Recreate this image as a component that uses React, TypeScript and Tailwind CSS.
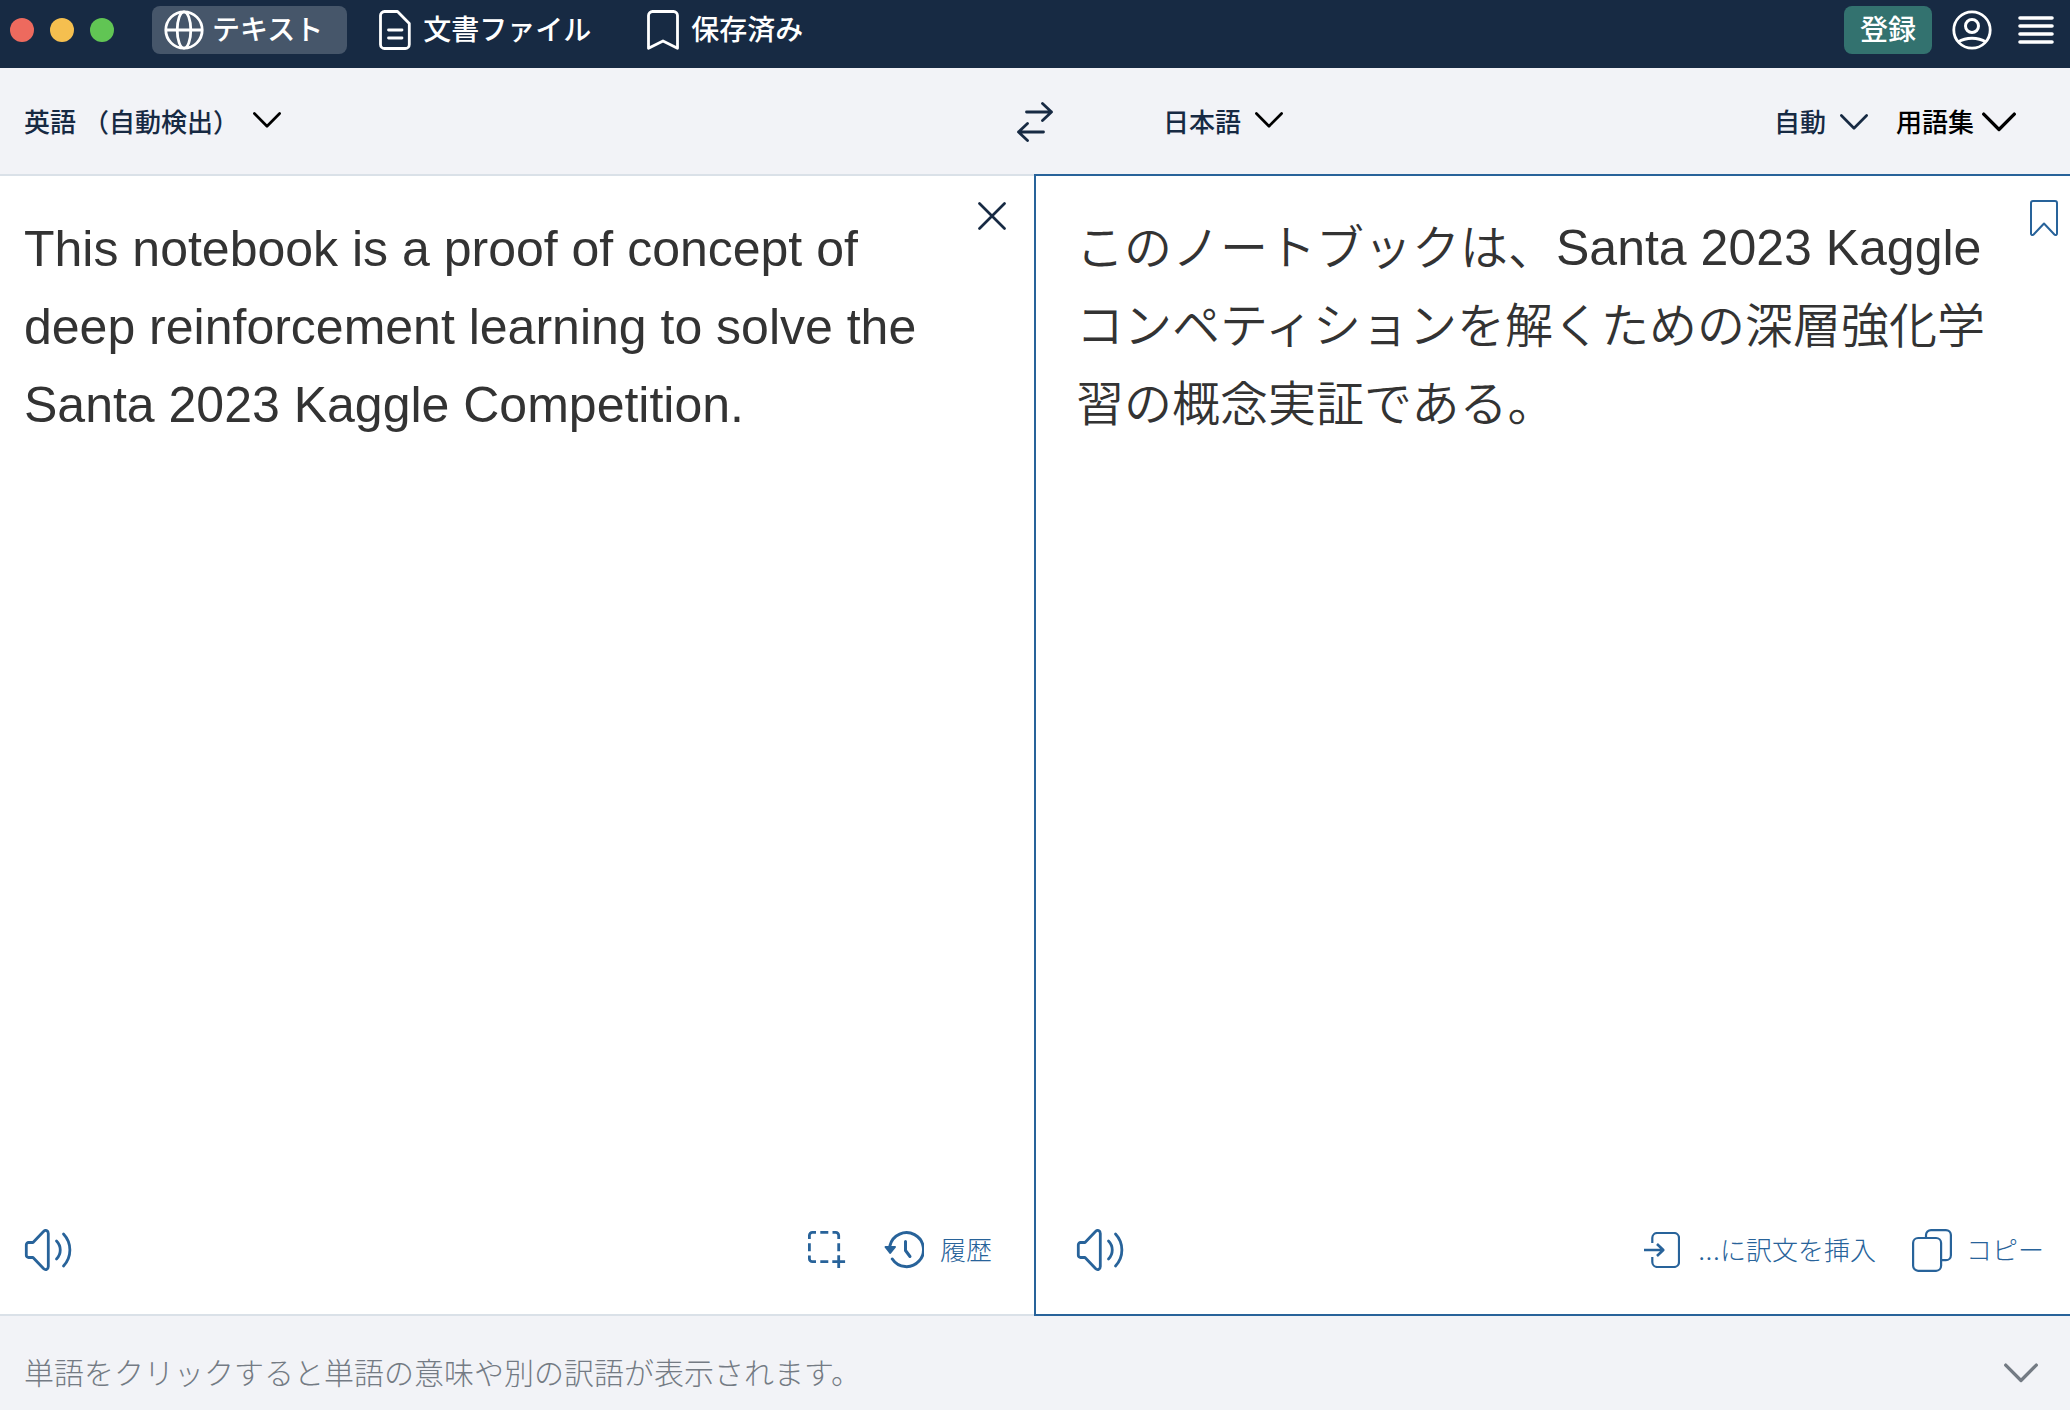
import { useState } from "react";
import type { ReactNode } from "react";

interface IconProps {
	className?: string;
}

const GlobeIcon = () => (
	<svg width="40" height="40" viewBox="0 0 40 40" fill="none" stroke="currentColor" strokeWidth="2.8">
		<circle cx="20" cy="20" r="18.2" />
		<ellipse cx="20" cy="20" rx="6.8" ry="18.2" />
		<path d="M1.6 20h36.8" />
	</svg>
);

const DocumentIcon = () => (
	<svg
		width="32"
		height="40"
		viewBox="0 0 32 40"
		fill="none"
		stroke="currentColor"
		strokeWidth="2.8"
		strokeLinecap="round"
		strokeLinejoin="round"
	>
		<path d="M5.5 1.5H18.5L30.3 13.500V34.500a4 4 0 0 1-4 4H5.500a4 4 0 0 1-4-4V5.500a4 4 0 0 1 4-4Z" />
		<path d="M9.500 20H23M9.500 28H23" />
	</svg>
);

const SavedIcon = () => (
	<svg
		width="32"
		height="40"
		viewBox="0 0 32 40"
		fill="none"
		stroke="currentColor"
		strokeWidth="2.8"
		strokeLinejoin="round"
	>
		<path d="M1.500 38.300V5.500a4 4 0 0 1 4-4H26.500a4 4 0 0 1 4 4V38.300L16 31Z" />
	</svg>
);

const AccountIcon = () => (
	<svg width="40" height="40" viewBox="0 0 40 40" fill="none" stroke="currentColor" strokeWidth="2.8">
		<circle cx="20" cy="20" r="18.2" />
		<circle cx="20" cy="16" r="6.500" strokeWidth="3" />
		<path d="M6 32C14 27 26 27 34 32" />
	</svg>
);

const MenuIcon = () => (
	<svg
		width="36"
		height="28"
		viewBox="0 0 36 28"
		fill="none"
		stroke="currentColor"
		strokeWidth="3.600"
		strokeLinecap="round"
	>
		<path d="M2 2H34M2 10H34M2 18H34M2 26H34" />
	</svg>
);

const ChevronIcon = ({ className }: IconProps) => (
	<svg
		className={className}
		viewBox="0 0 28 16"
		fill="none"
		stroke="currentColor"
		strokeWidth="2.700"
		strokeLinecap="round"
		strokeLinejoin="round"
	>
		<path d="M1.400 1.500L14 14.200L26.600 1.500" />
	</svg>
);

const SwapIcon = () => (
	<svg
		width="36"
		height="40"
		viewBox="0 0 36 40"
		fill="none"
		stroke="currentColor"
		strokeWidth="2.800"
		strokeLinecap="round"
		strokeLinejoin="round"
	>
		<path d="M9.500 10H34.500M25.500 1.500L34.500 10L25.500 18.500" />
		<path d="M26.500 30H1.500M10.500 21.500L1.500 30L10.500 38.500" />
	</svg>
);

const CloseIcon = () => (
	<svg
		width="28"
		height="28"
		viewBox="0 0 28 28"
		fill="none"
		stroke="currentColor"
		strokeWidth="2.700"
		strokeLinecap="round"
	>
		<path d="M1.500 1.500L26.500 26.500M26.500 1.500L1.500 26.500" />
	</svg>
);

const BookmarkIcon = () => (
	<svg
		width="28"
		height="36"
		viewBox="0 0 28 36"
		fill="none"
		stroke="currentColor"
		strokeWidth="2"
		strokeLinejoin="round"
	>
		<path d="M3 1H25a2 2 0 0 1 2 2V33.500c0 1.500-1.500 2-2.600 1L14 23.500L3.600 34.500C2.500 35.500 1 35 1 33.500V3a2 2 0 0 1 2-2Z" />
	</svg>
);

const SpeakerIcon = () => (
	<svg
		width="48"
		height="42"
		viewBox="-1 0 48 42"
		fill="none"
		stroke="currentColor"
		strokeWidth="2.800"
		strokeLinecap="round"
		strokeLinejoin="round"
	>
		<path d="M3.500 13.500H8L18.500 2.500C20.500 .5 23.300 1.500 23.300 4.500V37.500C23.300 40.500 20.500 41.500 18.500 39.500L8 28.500H3.500a2.200 2.200 0 0 1-2.200-2.200V15.700a2.200 2.200 0 0 1 2.200-2.200Z" />
		<path d="M31.500 12C36.500 17 36.500 25 31.500 30" />
		<path d="M38.500 5C47 14 47 28 38.500 37" />
	</svg>
);

const CaptureIcon = () => (
	<svg width="38" height="38" viewBox="0 0 38 38" fill="none" stroke="currentColor" strokeWidth="2.800">
		<path d="M1.400 8V4.400a3 3 0 0 1 3-3H8M24.500 1.400h3.200a3 3 0 0 1 3 3V8M1.400 24.500v3.200a3 3 0 0 0 3 3H8" />
		<path d="M12.300 1.400h8M1.400 12.300v8M30.700 12.300v8M12.300 30.700h8" />
		<path d="M24.300 30.700h12.800M30.700 24.300v12.800" />
	</svg>
);

const HistoryIcon = () => (
	<svg
		width="40"
		height="38"
		viewBox="0 0 40 38"
		fill="none"
		stroke="currentColor"
		strokeWidth="3"
		strokeLinecap="round"
		strokeLinejoin="round"
	>
		<path d="M6 14.500A17 17 0 1 1 8.300 28" />
		<path d="M1.500 16H11L6.200 22Z" fill="currentColor" strokeWidth="2" />
		<path d="M21.500 10.500V19.500L26 25.500" />
	</svg>
);

const InsertIcon = () => (
	<svg
		width="36"
		height="36"
		viewBox="0 0 36 36"
		fill="none"
		stroke="currentColor"
		strokeWidth="2.200"
		strokeLinejoin="round"
	>
		<path d="M8.300 11V6a5 5 0 0 1 5-5H30a5 5 0 0 1 5 5V30a5 5 0 0 1-5 5H13.300a5 5 0 0 1-5-5V25" />
		<path d="M0 18H19M13 12L19.300 18L13 24" strokeWidth="2.600" />
	</svg>
);

const CopyIcon = () => (
	<svg width="40" height="43" viewBox="0 0 40 43" fill="none" stroke="currentColor" strokeWidth="2.200">
		<rect x="1.100" y="9" width="28" height="32.800" rx="5" />
		<path d="M14 9V6.100a5 5 0 0 1 5-5H33.900a5 5 0 0 1 5 5V26.200a5 5 0 0 1-5 5H29.100" />
	</svg>
);

interface TabButtonProps {
	icon: ReactNode;
	text: string;
	active: boolean;
	extraClasses: string;
	onClick: () => void;
}

function TabButton({ icon, text, active, extraClasses, onClick }: TabButtonProps) {
	return (
		<button
			type="button"
			aria-pressed={active}
			onClick={onClick}
			className={`flex h-12 items-center rounded-lg pl-3 pr-6 ${extraClasses} ${active ? "bg-[#46566a]" : ""}`}
		>
			{icon}
			{text}
		</button>
	);
}

interface LanguageSelectProps {
	label: string;
	options: string[];
	chevronClasses: string;
}

function LanguageSelect({ label, options, chevronClasses }: LanguageSelectProps) {
	return (
		<label className="flex items-center">
			<select aria-label={label} className="field-sizing-content appearance-none bg-transparent outline-none">
				{options.map(option => (
					<option key={option}>{option}</option>
				))}
			</select>
			<ChevronIcon className={chevronClasses} />
		</label>
	);
}

const tabs = [
	{ id: "text", text: "テキスト", icon: <GlobeIcon />, extraClasses: "gap-2" },
	{ id: "files", text: "文書ファイル", icon: <DocumentIcon />, extraClasses: "gap-3" },
	{ id: "saved", text: "保存済み", icon: <SavedIcon />, extraClasses: "gap-3" },
];

export default function App() {
	const [activeTab, setActiveTab] = useState("text");
	const [source, setSource] = useState(
		"This notebook is a proof of concept of deep reinforcement learning to solve the Santa 2023 Kaggle Competition.",
	);

	return (
		<div
			lang="ja"
			className="flex min-h-screen flex-col bg-[#f2f3f7] font-['Inter','Noto_Sans_CJK_JP',sans-serif] text-[26px] text-[#172a43]"
		>
			<header className="flex items-center bg-[#172a43] pt-[6px] pb-[14px] pl-[10px] pr-4 text-[28px] leading-10 font-medium text-white">
				<div className="flex gap-4">
					<span className="size-6 rounded-full bg-[#ed6a5e]" />
					<span className="size-6 rounded-full bg-[#f5bf4f]" />
					<span className="size-6 rounded-full bg-[#61c554]" />
				</div>
				<nav className="ml-[38px] flex gap-5">
					{tabs.map(tab => (
						<TabButton
							key={tab.id}
							icon={tab.icon}
							text={tab.text}
							extraClasses={tab.extraClasses}
							active={activeTab === tab.id}
							onClick={() => setActiveTab(tab.id)}
						/>
					))}
				</nav>
				<div className="ml-auto flex items-center">
					<button type="button" className="h-12 rounded-lg bg-[#33726f] px-4">
						登録
					</button>
					<button type="button" aria-label="アカウント" className="ml-5">
						<AccountIcon />
					</button>
					<button type="button" aria-label="メニュー" className="ml-[26px]">
						<MenuIcon />
					</button>
				</div>
			</header>

			<div className="grid h-[106px] grid-cols-[1fr_56px_1fr] items-center pt-0.5 font-medium">
				<div className="flex pl-6">
					<LanguageSelect
						label="原文の言語"
						options={["英語 （自動検出）"]}
						chevronClasses="ml-[14px] mb-1 h-4 w-7 text-black"
					/>
				</div>
				<button type="button" aria-label="言語を入れ替える" className="flex justify-center">
					<SwapIcon />
				</button>
				<div className="flex items-center pl-[100px] pr-[54px]">
					<LanguageSelect
						label="訳文の言語"
						options={["日本語"]}
						chevronClasses="ml-[14px] mb-1 h-4 w-7 text-black"
					/>
					<div className="ml-auto flex items-center gap-7">
						<LanguageSelect label="文体" options={["自動"]} chevronClasses="ml-[14px] h-4 w-7" />
						<button type="button" className="flex items-center gap-2 text-black">
							用語集
							<ChevronIcon className="h-5 w-[34px]" />
						</button>
					</div>
				</div>
			</div>

			<main className="grid flex-1 grid-cols-[1034fr_1036fr] text-[#28639a]">
				<section className="flex flex-col border-y-2 border-[#dae1e8] bg-white">
					<div className="flex flex-1 items-start pl-6 pr-7">
						<textarea
							aria-label="原文"
							spellCheck={false}
							value={source}
							onChange={e => setSource(e.target.value)}
							className="h-full flex-1 resize-none pt-[34px] font-['Liberation_Sans','Noto_Sans_CJK_JP',sans-serif] text-[50px] leading-[78px] text-[#333333] outline-none"
						/>
						<button
							type="button"
							aria-label="原文を消去"
							onClick={() => setSource("")}
							className="mt-[26px] text-[#172a43]"
						>
							<CloseIcon />
						</button>
					</div>
					<div className="flex h-32 items-center pl-6 pr-[42px] font-light">
						<button type="button" aria-label="原文を読み上げる">
							<SpeakerIcon />
						</button>
						<button type="button" aria-label="画面から取り込む" className="ml-auto">
							<CaptureIcon />
						</button>
						<button type="button" className="ml-[38px] flex items-center gap-4">
							<HistoryIcon />
							履歴
						</button>
					</div>
				</section>

				<section className="flex flex-col border-y-2 border-l-2 border-[#28639a] bg-white">
					<div className="flex flex-1 items-start pl-10 pr-3">
						<p className="flex-1 pt-[34px] pr-9 font-['Liberation_Sans','Noto_Sans_CJK_JP',sans-serif] text-[48px] leading-[78px] font-[350] text-[#333333]">
							このノートブックは、
							<span className="text-[50px] leading-none font-normal">Santa 2023 Kaggle</span>
							コンペティションを解くための深層強化学習の概念実証である。
						</p>
						<button type="button" aria-label="訳文を保存" className="mt-6">
							<BookmarkIcon />
						</button>
					</div>
					<div className="flex h-32 items-center pl-10 pr-[26px] font-light">
						<button type="button" aria-label="訳文を読み上げる">
							<SpeakerIcon />
						</button>
						<button type="button" className="ml-auto flex items-center gap-[18px]">
							<InsertIcon />
							...に訳文を挿入
						</button>
						<button type="button" className="ml-9 flex items-center gap-[14px]">
							<CopyIcon />
							コピー
						</button>
					</div>
				</section>
			</main>

			<footer className="flex h-[94px] items-center justify-between pt-5 pl-6 pr-8 text-[30px] font-light text-[#747b84]">
				<p>単語をクリックすると単語の意味や別の訳語が表示されます。</p>
				<button type="button" aria-label="辞書を開く">
					<ChevronIcon className="h-5 w-[34px]" />
				</button>
			</footer>
		</div>
	);
}
